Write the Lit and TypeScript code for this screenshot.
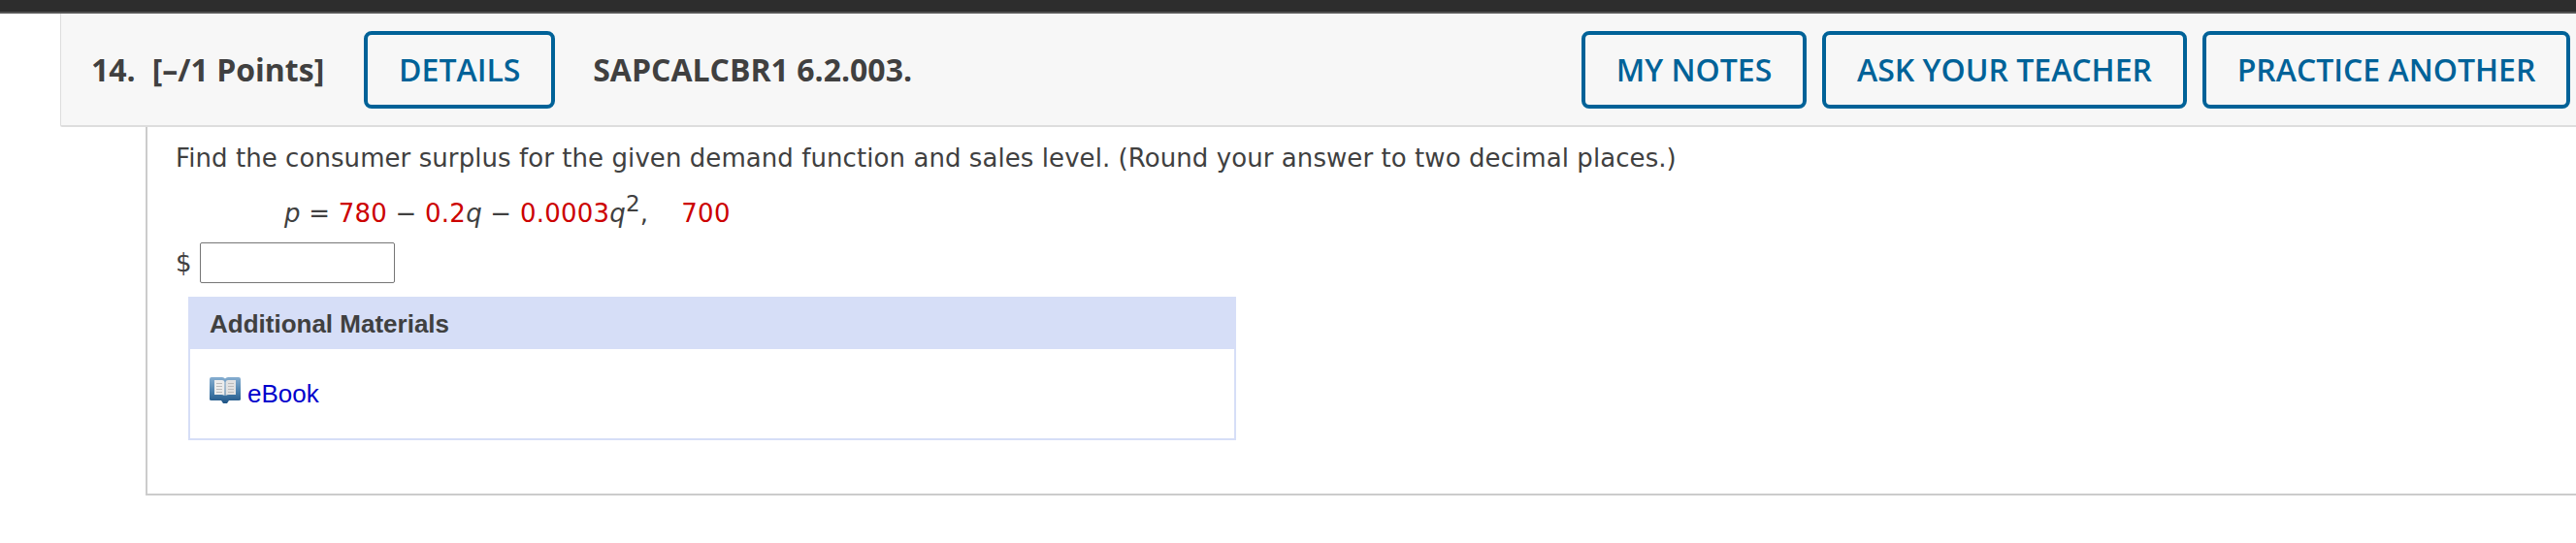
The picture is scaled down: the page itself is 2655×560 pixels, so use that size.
import { LitElement, html, css } from 'lit';
import { customElement } from 'lit/decorators.js';

const bookIcon = html`
  <svg class="book" width="32" height="28" viewBox="0 0 32 28">
    <defs>
      <linearGradient id="cover" x1="0" y1="0" x2="0" y2="1">
        <stop offset="0" stop-color="#86aed0"></stop>
        <stop offset="0.55" stop-color="#4a80ad"></stop>
        <stop offset="1" stop-color="#1f5485"></stop>
      </linearGradient>
    </defs>
    <path d="M0 3 Q0 1 2 1 H13 Q15 1 16 2.500 Q17 1 19 1 H30 Q32 1 32 3 V24 Q32 25 30 25 H20 L18 28 H14 L12 25 H2 Q0 25 0 24 Z" fill="url(#cover)"></path>
    <path d="M5 4 H13 Q15 4 15.500 6 V20 Q14 19 12 19 H5 Z" fill="#ececec"></path>
    <path d="M27 4 H19 Q17 4 16.500 6 V20 Q18 19 20 19 H27 Z" fill="#e2e2e2"></path>
    <path d="M7 7.500 H13 M7 10.500 H13 M7 13.500 H13 M7 16.500 H13 M19 7.500 H25 M19 10.500 H25 M19 13.500 H25 M19 16.500 H25" stroke="#bcbcbc" stroke-width="1.200"></path>
  </svg>
`;

@customElement('app-root')
export class AppRoot extends LitElement {
  static styles = css`
    :host {
      display: block;
      background: #fff;
      min-height: 560px;
      color: #404040;
    }

    .top-bar {
      height: 12px;
      background: #2d2d2d;
      border-bottom: 2px solid #555;
    }

    .head {
      display: flex;
      align-items: center;
      height: 115px;
      margin-left: 62px;
      padding-left: 31px;
      padding-right: 6px;
      background: #f7f7f7;
      border-left: 1px solid #ddd;
      border-bottom: 2px solid #ddd;
      border-bottom-left-radius: 2px;
      font-family: 'Open Sans', sans-serif;
      font-size: 32px;
      font-weight: 700;
    }

    .num {
      margin-right: 17px;
    }

    .btn {
      box-sizing: border-box;
      display: flex;
      align-items: center;
      justify-content: center;
      height: 80px;
      border: 4px solid #006298;
      border-radius: 8px;
      color: #006298;
      font-size: 32px;
      font-weight: 600;
      white-space: nowrap;
    }

    .details {
      width: 197px;
      margin-left: 41px;
      margin-right: 39px;
    }

    .actions {
      display: flex;
      gap: 16px;
      margin-left: auto;
    }

    .notes { width: 232px; }
    .ask { width: 376px; }
    .another { width: 379px; }

    .body {
      margin-left: 150px;
      height: 380px;
      box-sizing: border-box;
      padding: 16px 0 0 29px;
      border-left: 2px solid #ccc;
      border-bottom: 2px solid #ccc;
      font-family: 'DejaVu Sans', sans-serif;
      font-size: 26px;
      letter-spacing: 0.07px;
    }

    .prompt {
      line-height: 32px;
    }

    .formula {
      margin: 21px 0 0 112px;
      line-height: 40px;
      white-space: pre;
      letter-spacing: 0.23px;
    }

    .formula i {
      font-style: oblique;
    }

    .formula b {
      font-weight: 400;
      color: #cc0000;
    }

    .formula sup {
      font-size: 23px;
      line-height: 0;
      vertical-align: 11px;
    }

    .answer {
      display: flex;
      align-items: center;
      gap: 8px;
      margin-top: 10px;
    }

    .answer input {
      box-sizing: border-box;
      width: 201px;
      height: 42px;
      margin: 0;
      padding: 0;
      background: #fff;
      border: 1px solid #767676;
      border-radius: 2px;
    }

    .materials {
      box-sizing: border-box;
      width: 1080px;
      height: 148px;
      margin: 14px 0 0 13px;
      border: 2px solid #d6def7;
      font-family: 'Liberation Sans', sans-serif;
      font-size: 26px;
      letter-spacing: 0;
    }

    .materials-title {
      display: flex;
      align-items: center;
      height: 52px;
      padding-left: 20px;
      background: #d6def7;
      font-weight: 700;
    }

    .materials-body {
      display: flex;
      align-items: center;
      gap: 7px;
      padding: 31px 0 0 20px;
    }

    .book {
      flex: none;
      margin-top: -10px;
    }

    a {
      color: #0000cc;
      text-decoration: none;
    }
  `;

  render() {
    return html`
      <div class="top-bar"></div>
      <div class="head">
        <span class="num">14.</span>
        <span>[–/1 Points]</span>
        <span class="btn details">DETAILS</span>
        <span>SAPCALCBR1 6.2.003.</span>
        <div class="actions">
          <span class="btn notes">MY NOTES</span>
          <span class="btn ask">ASK YOUR TEACHER</span>
          <span class="btn another">PRACTICE ANOTHER</span>
        </div>
      </div>
      <div class="body">
        <div class="prompt">Find the consumer surplus for the given demand function and sales level. (Round your answer to two decimal places.)</div>
        <div class="formula"><i>p</i> = <b>780</b> − <b>0.2</b><i>q</i> − <b>0.0003</b><i>q</i><sup>2</sup>,    <b>700</b></div>
        <div class="answer">
          <span>$</span>
          <input type="text" />
        </div>
        <div class="materials">
          <div class="materials-title">Additional Materials</div>
          <div class="materials-body">
            ${bookIcon}
            <a href="#">eBook</a>
          </div>
        </div>
      </div>
    `;
  }
}
